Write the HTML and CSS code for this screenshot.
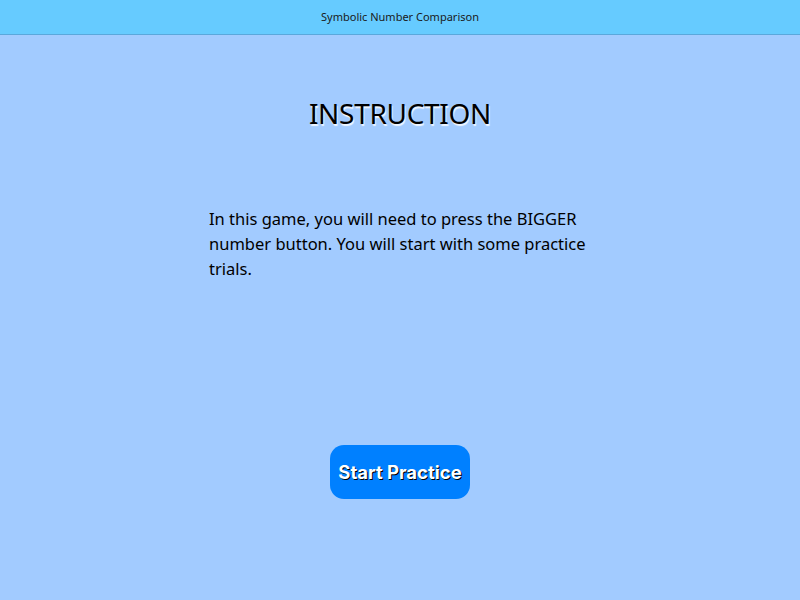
FILE: index.html
```html
<!DOCTYPE html>
<html lang="en">

<head>
     <meta charset="UTF-8">
     <meta name="viewport" content="width=device-width, initial-scale=1.0">
     <title>Symbolic Number Comparison</title>
     <link rel="stylesheet" href="styles.css">
</head>

<body>
     <header class="top-bar">Symbolic Number Comparison</header>

     <main class="screen">
          <h1 class="title">INSTRUCTION</h1>
          <p class="instruction">In this game, you will need to press the BIGGER number button. You will start with some practice trials.</p>
          <button class="start-btn">Start Practice</button>
     </main>
</body>

</html>
```

FILE: styles.css
```css
html,
body {
     margin: 0;
     padding: 0;
     height: 100%;
}

body {
     font-family: "Noto Sans", "Open Sans", sans-serif;
     background-color: #a2cbff;
     color: #000;
}

.top-bar {
     height: 34px;
     line-height: 34px;
     text-align: center;
     font-size: 11px;
     color: #1a1a1a;
     background-color: #66cbff;
     border-bottom: 1px solid #5aa8dc;
}

.screen {
     display: flex;
     flex-direction: column;
     align-items: center;
}

.title {
     margin: 58px 0 0;
     font-size: 28px;
     font-weight: 400;
     letter-spacing: -0.3px;
     line-height: 40px;
     text-shadow: 1px 2px 1px rgba(255, 255, 255, 0.85);
}

.instruction {
     width: 382px;
     margin: 73px 0 0;
     font-size: 16.5px;
     line-height: 25px;
}

/* big rounded button under the text */
.start-btn {
     margin-top: 164px;
     width: 140px;
     height: 54px;
     border: none;
     border-radius: 14px;
     background-color: #0080ff;
     color: #fff;
     font-family: Inter, Roboto, sans-serif;
     font-size: 18.5px;
     font-weight: 700;
     text-shadow: 1px 1px 0 #000;
     cursor: pointer;
}
```
